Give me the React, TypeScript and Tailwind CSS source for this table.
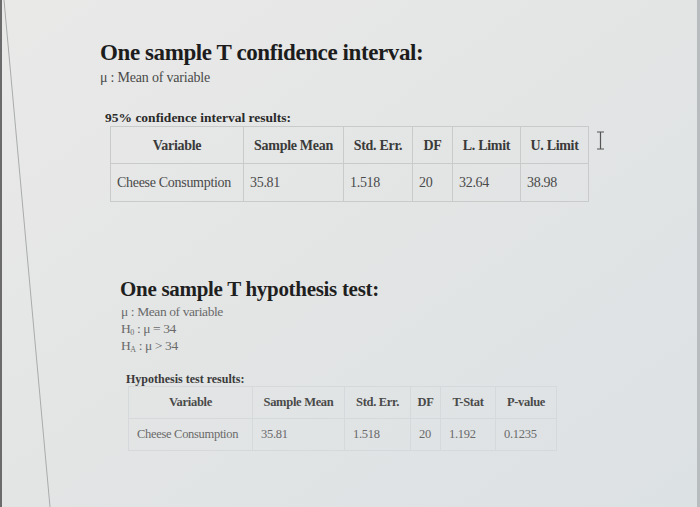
const serif = "font-['Liberation_Serif','Times_New_Roman',serif]";

const ciHead = [
    { label: 'Variable', w: 'w-[133px]' },
    { label: 'Sample Mean', w: 'w-[100px]' },
    { label: 'Std. Err.', w: 'w-[69px]' },
    { label: 'DF', w: 'w-[40px]' },
    { label: 'L. Limit', w: 'w-[68px]' },
    { label: 'U. Limit', w: 'w-[68px]' },
];
const ciRow = ['Cheese Consumption', '35.81', '1.518', '20', '32.64', '38.98'];

const htHead = [
    { label: 'Variable', w: 'w-[124px]' },
    { label: 'Sample Mean', w: 'w-[92px]' },
    { label: 'Std. Err.', w: 'w-[66px]' },
    { label: 'DF', w: 'w-[30px]' },
    { label: 'T-Stat', w: 'w-[55px]' },
    { label: 'P-value', w: 'w-[61px]' },
];
const htRow = ['Cheese Consumption', '35.81', '1.518', '20', '1.192', '0.1235'];

export default function App() {
    return (
        <div
            className={`relative h-[507px] w-[700px] overflow-hidden bg-gradient-to-br from-[#e9e9e8] via-[#e3e5e5] to-[#dce1e4] ${serif}`}>
            {/* photo edges */}
            <div className="absolute inset-y-0 left-0 w-[2px] bg-[#6b6b6b]" />
            <div className="absolute inset-y-0 right-0 w-[3px] bg-[#b9bcbe]" />
            <svg
                className="absolute left-0 top-0"
                width="700"
                height="507"
                viewBox="0 0 700 507">
                <line x1="4" y1="0" x2="50" y2="507" stroke="#a9abab" strokeWidth="1" />
            </svg>

            {/* text cursor */}
            <svg
                className="absolute left-[596px] top-[131px]"
                width="9"
                height="19"
                viewBox="0 0 9 19">
                <path
                    d="M1 1 H8 M4.5 1 V18 M1 18 H8"
                    stroke="#555"
                    strokeWidth="1.2"
                    fill="none"
                />
            </svg>

            <div className="pl-[100px] pt-[39px]">
                <h1 className="text-[23px] font-bold leading-[28px] tracking-[-0.4px] text-[#1c1c1c]">
                    One sample T confidence interval:
                </h1>
                <p className="mt-[2px] text-[14px] leading-[18px] tracking-[-0.2px] text-[#4a4a4a]">
                    μ : Mean of variable
                </p>

                <div className="mt-[23px] pl-[5px]">
                    <p className="text-[13.5px] font-bold leading-[16px] text-[#2a2a2a]">
                        95% confidence interval results:
                    </p>
                    <table className="ml-[5px] border-collapse text-[14px] tracking-[-0.3px]">
                        <thead>
                            <tr className="h-[37px]">
                                {ciHead.map((c) => (
                                    <th
                                        key={c.label}
                                        className={`${c.w} border border-[#c9cbcb] text-center font-bold text-[#3a3a3a]`}>
                                        {c.label}
                                    </th>
                                ))}
                            </tr>
                        </thead>
                        <tbody>
                            <tr className="h-[38px]">
                                {ciRow.map((v, i) => (
                                    <td
                                        key={i}
                                        className="border border-[#c9cbcb] pl-[6px] text-left text-[#4a4a4a]">
                                        {v}
                                    </td>
                                ))}
                            </tr>
                        </tbody>
                    </table>
                </div>

                <div className="ml-[20px] mt-[74px]">
                    <h2 className="text-[21px] font-bold leading-[26px] tracking-[-0.3px] text-[#1f1f1f]">
                        One sample T hypothesis test:
                    </h2>
                    <div className="ml-[1px] mt-[1px] text-[13.5px] leading-[17px] tracking-[-0.4px] text-[#6a6a6a]">
                        <p>μ : Mean of variable</p>
                        <p>
                            H<sub className="text-[8px]">0</sub> : μ = 34
                        </p>
                        <p>
                            H<sub className="text-[8px]">A</sub> : μ &gt; 34
                        </p>
                    </div>

                    <div className="mt-[18px] pl-[6px]">
                        <p className="text-[12px] font-bold leading-[14px] text-[#3a3a3a]">
                            Hypothesis test results:
                        </p>
                        <table className="ml-[2px] border-collapse text-[12.5px] tracking-[-0.3px]">
                            <thead>
                                <tr className="h-[32px]">
                                    {htHead.map((c) => (
                                        <th
                                            key={c.label}
                                            className={`${c.w} border border-[#d6d9db] text-center font-bold text-[#4a4a4a]`}>
                                            {c.label}
                                        </th>
                                    ))}
                                </tr>
                            </thead>
                            <tbody>
                                <tr className="h-[32px]">
                                    {htRow.map((v, i) => (
                                        <td
                                            key={i}
                                            className="border border-[#d6d9db] pl-[8px] text-left text-[#6a6a6a]">
                                            {v}
                                        </td>
                                    ))}
                                </tr>
                            </tbody>
                        </table>
                    </div>
                </div>
            </div>
        </div>
    );
}
